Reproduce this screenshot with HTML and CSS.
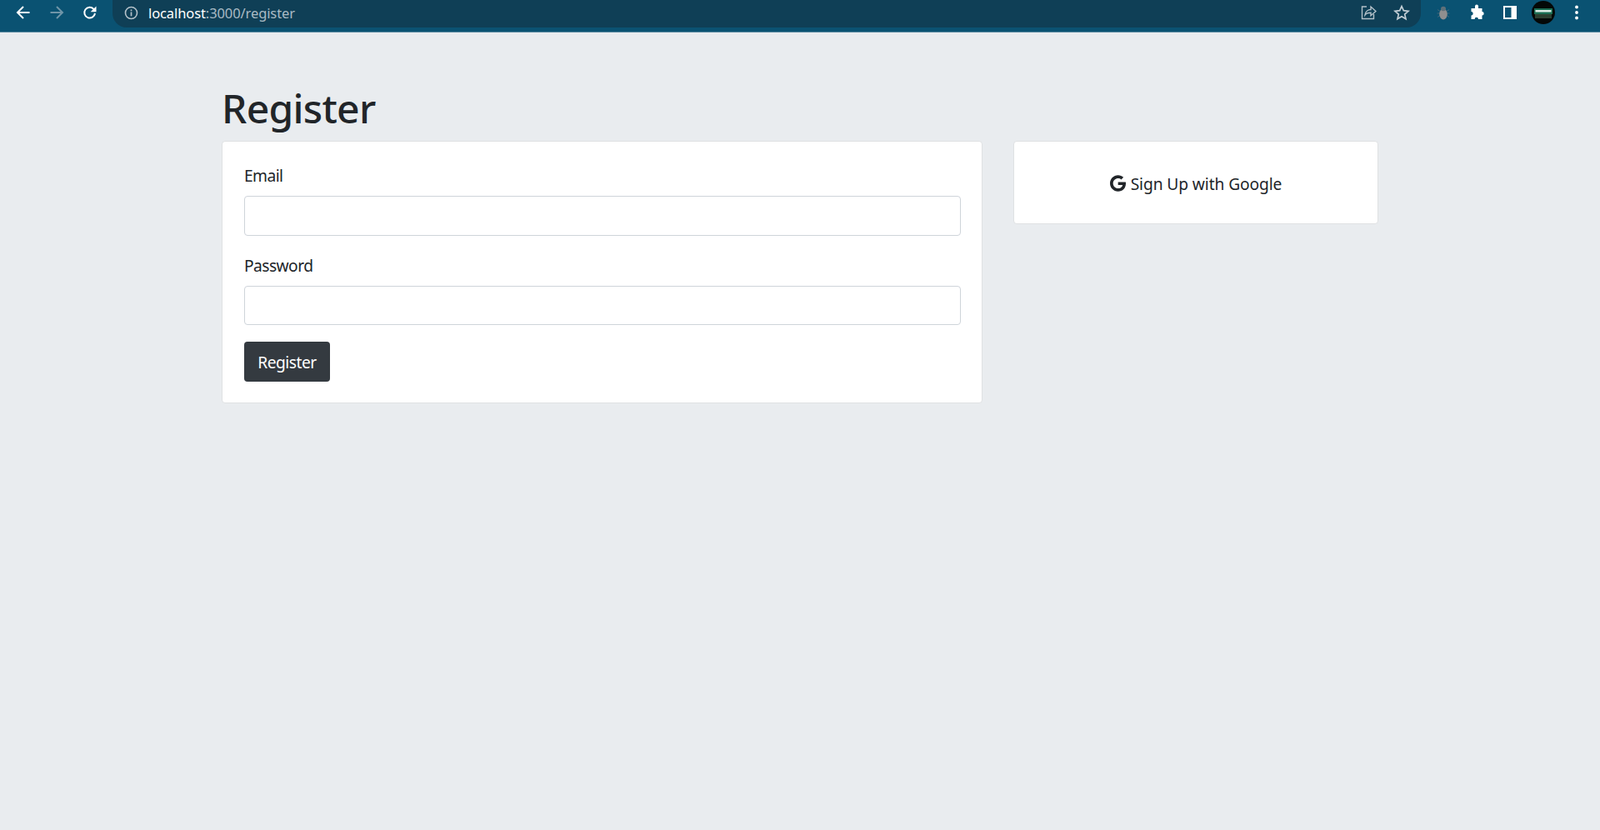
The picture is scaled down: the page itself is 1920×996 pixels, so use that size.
FILE: index.html
```html
<!DOCTYPE html>
<html lang="en">
<head>
<meta charset="utf-8">
<title>Register</title>
<link rel="stylesheet" href="styles.css">
</head>
<body>
<header class="toolbar">
  <div class="nav-buttons">
    <svg class="tool-icon" viewBox="0 0 20 20"><path d="M17.500 10H3.500M10 3L3 10l7 7" fill="none" stroke="#fff" stroke-width="2"/></svg>
    <svg class="tool-icon" viewBox="0 0 20 20"><path d="M2.500 10h14M10 3l7 7-7 7" fill="none" stroke="#6f95a8" stroke-width="2"/></svg>
    <svg class="tool-icon" viewBox="0 0 20 20"><path d="M16 11a6.400 6.400 0 1 1-1.600-5.200L16.500 8" fill="none" stroke="#fff" stroke-width="2"/><path d="M17.500 2.500v6.800h-6.800z" fill="#fff"/></svg>
  </div>
  <div class="omnibox">
    <svg class="info-icon" viewBox="0 0 16 16"><circle cx="8" cy="8" r="6.600" fill="none" stroke="#b4c1c9" stroke-width="1.500"/><rect x="7.200" y="7" width="1.600" height="4.600" fill="#b4c1c9"/><rect x="7.200" y="4.200" width="1.600" height="1.700" fill="#b4c1c9"/></svg>
    <span class="url"><span class="host">localhost</span>:3000/register</span>
    <div class="omni-actions">
      <svg class="omni-icon" viewBox="0 0 20 20"><path d="M8 3H2.500v14.500h14V12" fill="none" stroke="#b4c1c9" stroke-width="1.400"/><path d="M6 13c.5-4 3.500-6.500 7-6.500V3l6 5.500-6 5.200V10.300c-3 0-5.500.8-7 2.700z" fill="none" stroke="#b4c1c9" stroke-width="1.400"/></svg>
      <svg class="omni-icon" viewBox="0 0 20 20"><path d="M10 2.500l2.300 5.200 5.700.6-4.300 3.800 1.300 5.600-5-2.900-5 2.900 1.300-5.600L2 8.300l5.700-.6z" fill="none" stroke="#c3ced5" stroke-width="1.700"/></svg>
    </div>
  </div>
  <div class="extensions">
    <svg class="ext-icon" viewBox="0 0 20 20"><path d="M3 6.500l3 2M17 6.500l-3 2M2.500 11h3M17.500 11h-3M3 15.500l3-2M17 15.500l-3-2" stroke="#3f6579" stroke-width="1"/><ellipse cx="10" cy="12" rx="4.800" ry="6.500" fill="#8f8f8f"/><ellipse cx="10" cy="5.500" rx="3" ry="2.800" fill="#5f7079"/></svg>
    <svg class="ext-icon" viewBox="0 0 20 20"><path d="M8 2.500a2 2 0 0 1 4 0V5h4.500v4a2.200 2.200 0 0 1 0 4.400V18h-4.500a2.200 2.200 0 0 0-4.400 0H3.500v-4.500a2.200 2.200 0 0 0 0-4.400V5H8z" fill="#fff"/></svg>
    <svg class="ext-icon" viewBox="0 0 20 20"><rect x="2" y="2" width="16" height="16" fill="#fff"/><rect x="4" y="4" width="7.500" height="12" fill="#0a5272"/></svg>
    <svg class="avatar" viewBox="0 0 28 28"><circle cx="14" cy="14" r="14" fill="#040807"/><rect x="4" y="16" width="20" height="5" fill="#2c3f30"/><rect x="3" y="9" width="22" height="7" fill="#1a6d52"/><rect x="4.500" y="11" width="19" height="2.500" fill="#dcece5"/></svg>
    <svg class="ext-icon" viewBox="0 0 20 20"><circle cx="10" cy="3.500" r="1.900" fill="#fff"/><circle cx="10" cy="10" r="1.900" fill="#fff"/><circle cx="10" cy="16.500" r="1.900" fill="#fff"/></svg>
  </div>
</header>
<main class="page">
  <h1 class="title">Register</h1>
  <div class="columns">
    <section class="card form-card">
      <form>
        <div class="field">
          <label class="label" for="email">Email</label>
          <input class="input" id="email" type="email">
        </div>
        <div class="field">
          <label class="label" for="password">Password</label>
          <input class="input" id="password" type="password">
        </div>
        <button class="submit" type="button">Register</button>
      </form>
    </section>
    <section class="card google-card">
      <svg class="google-icon" viewBox="0 0 488 512"><path fill="#212529" d="M488 261.800C488 403.300 391.100 504 248 504 110.800 504 0 393.200 0 256S110.800 8 248 8c66.800 0 123 24.500 166.300 64.900l-67.500 64.900C258.500 52.600 94.300 116.600 94.300 256c0 86.500 69.100 156.600 153.700 156.600 98.200 0 135-70.400 140.800-106.900H248v-85.300h236.100c2.300 12.700 3.900 24.900 3.900 41.400z"/></svg>
      <span class="google-text">Sign Up with Google</span>
    </section>
  </div>
</main>
</body>
</html>
```

FILE: styles.css
```css
* { box-sizing: border-box; }
html, body { margin: 0; height: 100%; }
body {
  background: #e9ecef;
  color: #212529;
  font-family: "Noto Sans", "Open Sans", sans-serif;
  font-size: 19.200px;
  overflow: hidden;
}
.toolbar {
  height: 39px;
  background: #0a5272;
  border-bottom: 1px solid #5d8ba1;
  display: flex;
  align-items: flex-start;
}
.nav-buttons {
  width: 135px;
  height: 33px;
  padding: 0 0 3px 18px;
  display: flex;
  align-items: center;
  gap: 20px;
}
.tool-icon { width: 20px; height: 20px; }
.omnibox {
  width: 1570px;
  height: 33px;
  background: #0f3f56;
  border-radius: 0 0 17px 17px;
  display: flex;
  align-items: center;
  padding: 0 13px 3px 14px;
}
.info-icon { width: 17px; height: 17px; }
.url {
  margin-left: 12px;
  font-size: 16.500px;
  letter-spacing: -.1px;
  color: #a9bac4;
}
.host { color: #fff; }
.omni-actions {
  margin-left: auto;
  display: flex;
  gap: 20px;
}
.omni-icon { width: 20px; height: 20px; }
.extensions {
  height: 33px;
  flex: 1;
  display: flex;
  align-items: center;
  padding: 0 0 3px 17px;
  gap: 20px;
}
.ext-icon { width: 20px; height: 20px; }
.avatar { width: 28px; height: 28px; margin: 0 -4px; }
.page {
  padding: 60px 266px 0;
}
.title {
  margin: 0 0 8px;
  font-size: 48px;
  font-weight: 500;
  line-height: 62px;
  letter-spacing: -.7px;
}
.columns {
  display: flex;
  align-items: flex-start;
  gap: 37px;
}
.card {
  background: #fff;
  border: 1px solid #dfe1e3;
  border-radius: 4px;
}
.form-card {
  width: 913px;
  padding: 25px 25px 25px 26px;
}
.field { margin-bottom: 20px; }
.label {
  display: block;
  line-height: 31px;
  margin-bottom: 9px;
  letter-spacing: -.55px;
}
.input {
  display: block;
  width: 100%;
  height: 48px;
  border: 1px solid #ced4da;
  border-radius: 4px;
  background: #fff;
}
.field + .field .input { height: 47px; }
.submit {
  display: block;
  width: 103px;
  height: 48px;
  background: #343a40;
  color: #fff;
  border: 0;
  border-radius: 4px;
  font: inherit;
  letter-spacing: -.5px;
}
.google-card {
  width: 438px;
  height: 100px;
  display: flex;
  align-items: center;
  justify-content: center;
  gap: 6px;
  letter-spacing: -.1px;
}
.google-icon { width: 19px; height: 20px; margin-top: 2px; }
.google-text { margin-top: 2px; }
```
